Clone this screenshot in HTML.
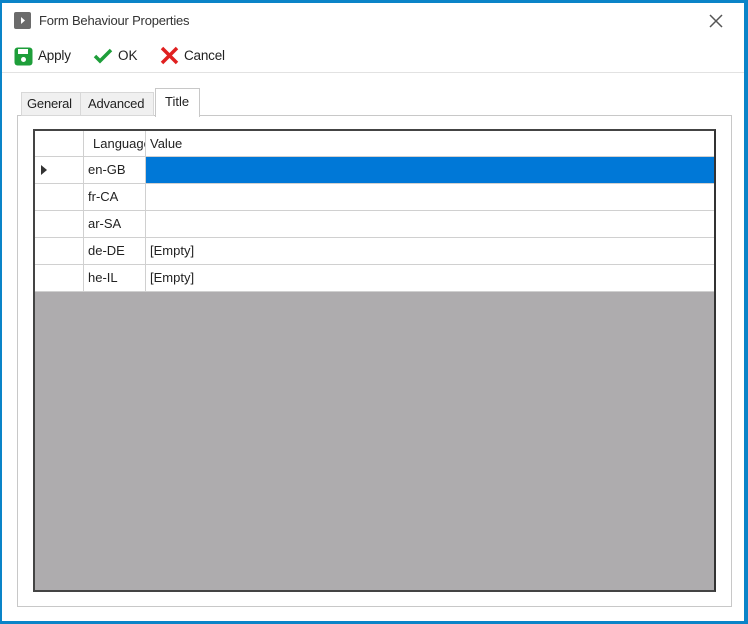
<!DOCTYPE html>
<html><head><style>
*{margin:0;padding:0;box-sizing:border-box}
body{width:748px;height:624px;background:#0a84c8;position:relative;overflow:hidden;font-family:"Liberation Sans",sans-serif;font-size:13px;color:#222}
.win{position:absolute;left:2px;top:3px;width:742px;height:618px;background:#fff}
.a{position:absolute}
.t{position:absolute;white-space:nowrap}
.row{position:absolute;left:35px;width:679px;height:27px;border-bottom:1px solid #d0d0d0;background:#fff}
.row div{position:absolute;top:0;height:26px;line-height:26px}
.c0{left:0;width:49px;border-right:1px solid #d0d0d0}
.c1{left:49px;width:62px;border-right:1px solid #d0d0d0;padding-left:4px}
.c2{left:111px;width:568px;padding-left:4px}
</style></head><body>
<div class="win"></div>
<div class="a" style="left:14px;top:12px;width:17px;height:17px;background:#6b6b6b;border-radius:2px"></div>
<svg class="a" style="left:14px;top:12px" width="17" height="17"><path d="M7 5 L11 8.5 L7 12Z" fill="#fff"/></svg>
<div class="t" style="left:39px;top:13px;font-size:13px;letter-spacing:-0.2px;color:#333">Form Behaviour Properties</div>
<svg class="a" style="left:709px;top:14px" width="14" height="14"><path d="M1 1L13 13M13 1L1 13" stroke="#555" stroke-width="1.5"/></svg>
<svg class="a" style="left:14px;top:47px" width="19" height="19"><rect x="0.5" y="0.5" width="18" height="18" rx="3" fill="#1e9e3a"/><rect x="4" y="2" width="10" height="5" fill="#fff"/><circle cx="9.5" cy="12.5" r="2.5" fill="#fff"/></svg>
<div class="t" style="left:38px;top:48px;font-size:13.5px;letter-spacing:-0.2px">Apply</div>
<svg class="a" style="left:93px;top:48px" width="20" height="16"><path d="M2 8 L7 13 L18 2" stroke="#1e9e3a" stroke-width="3.5" fill="none"/></svg>
<div class="t" style="left:118px;top:48px;font-size:13.5px">OK</div>
<svg class="a" style="left:160px;top:46px" width="19" height="19"><path d="M2 2L17 17M17 2L2 17" stroke="#e02020" stroke-width="3.5"/></svg>
<div class="t" style="left:184px;top:48px;font-size:13.5px;letter-spacing:-0.2px">Cancel</div>
<div class="a" style="left:2px;top:72px;width:742px;height:1px;background:#e2e2e2"></div>
<div class="a" style="left:17px;top:115px;width:715px;height:492px;border:1px solid #c8c8c8;background:#fff"></div>
<div class="a" style="left:21px;top:92px;width:60px;height:24px;border:1px solid #d8d8d8;background:#f0f0f0"></div>
<div class="t" style="left:27px;top:96px;letter-spacing:-0.2px">General</div>
<div class="a" style="left:80px;top:92px;width:74px;height:24px;border:1px solid #d8d8d8;background:#f0f0f0"></div>
<div class="t" style="left:88px;top:96px;letter-spacing:-0.2px">Advanced</div>
<div class="a" style="left:155px;top:88px;width:45px;height:29px;border:1px solid #c8c8c8;border-bottom:none;background:#fff"></div>
<div class="t" style="left:165px;top:94px">Title</div>
<div class="a" style="left:33px;top:129px;width:683px;height:463px;border:2px solid #444;border-right-color:#333;background:#aeacae"></div>
<div class="row" style="top:131px;height:26px"><div class="c0"></div><div class="c1" style="padding-left:9px;overflow:hidden;width:62px">Language</div><div class="c2">Value</div></div>
<div class="row" style="top:157px"><div class="c0"><svg width="49" height="26"><path d="M6 8L12 13L6 18Z" fill="#333"/></svg></div><div class="c1">en-GB</div><div class="c2" style="background:#0078d7;left:111px;height:26px"></div></div>
<div class="row" style="top:184px"><div class="c0"></div><div class="c1">fr-CA</div><div class="c2"></div></div>
<div class="row" style="top:211px"><div class="c0"></div><div class="c1">ar-SA</div><div class="c2"></div></div>
<div class="row" style="top:238px"><div class="c0"></div><div class="c1">de-DE</div><div class="c2">[Empty]</div></div>
<div class="row" style="top:265px"><div class="c0"></div><div class="c1">he-IL</div><div class="c2">[Empty]</div></div>
</body></html>
